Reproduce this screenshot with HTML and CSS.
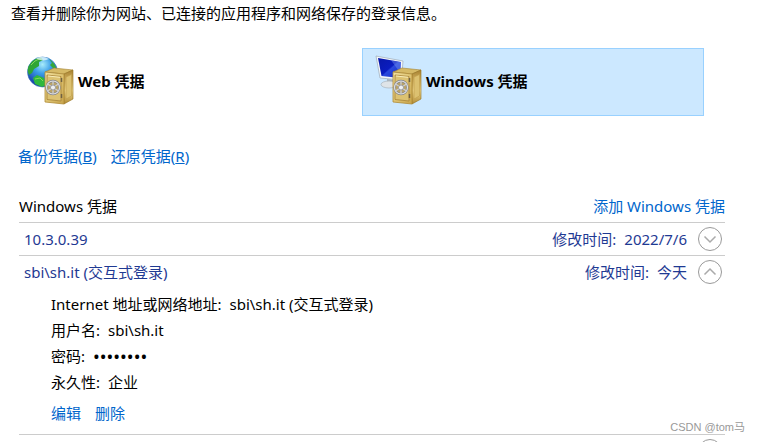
FILE: index.html
```
<!DOCTYPE html>
<html lang="zh-CN">
<head>
<meta charset="utf-8" />
<title>凭据管理器</title>
<link rel="stylesheet" href="styles.css">
</head>
<body>
<p class="intro">查看并删除你为网站、已连接的应用程序和网络保存的登录信息。</p>

<div class="tabs">
	<button type="button" class="tab">
		<svg class="tabIcon" viewBox="0 0 50 52" aria-hidden="true">
			<defs>
				<radialGradient id="sea" cx=".5" cy=".25" r=".75">
					<stop offset="0" stop-color="#a8ecfb"/>
					<stop offset=".4" stop-color="#3a9de8"/>
					<stop offset="1" stop-color="#1432a0"/>
				</radialGradient>
				<linearGradient id="front" x1="0" y1="0" x2="1" y2="1">
					<stop offset="0" stop-color="#f3e2a0"/>
					<stop offset=".5" stop-color="#dfc574"/>
					<stop offset="1" stop-color="#c6a24a"/>
				</linearGradient>
				<linearGradient id="side" x1="0" y1="0" x2="0" y2="1">
					<stop offset="0" stop-color="#a98230"/>
					<stop offset=".6" stop-color="#f0d98e"/>
					<stop offset="1" stop-color="#b08a34"/>
				</linearGradient>
				<linearGradient id="screen" x1="0" y1="0" x2="1" y2="1">
					<stop offset="0" stop-color="#0818a8"/>
					<stop offset=".5" stop-color="#0a1cc0"/>
					<stop offset=".55" stop-color="#2a48dc"/>
					<stop offset="1" stop-color="#1028c8"/>
				</linearGradient>
				<!-- 保险箱 -->
				<g id="safe">
					<path d="M18 17 27 13 46 15 37 19Z" fill="#d6ba66" stroke="#a58334" stroke-width=".6"/>
					<path d="M37 19 46 15 46 44 37 49Z" fill="url(#side)" stroke="#96721f" stroke-width=".6"/>
					<path d="M39 22 44.500 19.500 44.500 41 39 44Z" fill="#dcc170" stroke="#bf9c48" stroke-width=".6"/>
					<path d="M18 17 37 19 37 49 18 47Z" fill="url(#front)" stroke="#b08b36" stroke-width=".8"/>
					<path d="M20 20 34 21.500 34 46 20 44.500Z" fill="#dcc272" stroke="#a7843a" stroke-width=".8"/>
					<path d="M21 21 33 22.300" stroke="#f8ecb8"/>
					<path d="M34.500 23V27M34.500 39V43" stroke="#6f6142" stroke-width="1.500"/>
					<circle cx="26" cy="32.500" r="6.500" fill="#b9a368" stroke="#85858a" stroke-width="2.400"/>
					<circle cx="26" cy="32.500" r="6.500" fill="none" stroke="#dedfe2" stroke-width="1.200"/>
					<path d="M26 26V39M20.500 29 31.500 36M20.500 36 31.500 29" stroke="#cdced2" stroke-width="1.300"/>
					<circle cx="26" cy="32.500" r="2.500" fill="#eef0f3" stroke="#8c8c90" stroke-width=".8"/>
				</g>
			</defs>
			<circle cx="15.500" cy="17" r="15" fill="url(#sea)" stroke="#3472bb" stroke-width=".6"/>
			<path d="M3 9Q7 3 14 2.500L16 5 12 7 12 11 7 14 5 18 2 20Q-1 14 3 9Z" fill="#2fa536"/>
			<path d="M22 4Q28 8 29.500 14L26 13 23 10 25 8Z" fill="#3aa838"/>
			<path d="M6 23 10 20 17 23 19 30 15 32 8 29Z" fill="#2eb83e"/>
			<path d="M4 10 8 6 12 4M8 24 13 23 16 26" stroke="#86d65a" fill="none"/>
			<path d="M9 3.500Q15 0 22 4Q16 7 9 3.500" fill="#e9faff" opacity=".75"/>
			<use href="#safe"/>
		</svg>
		<span>Web 凭据</span>
	</button>
	<button type="button" class="tab active">
		<svg class="tabIcon" viewBox="0 0 50 52" aria-hidden="true">
			<path d="M12 24 20 25 20 31 12 30Z" fill="#aab4bd"/>
			<ellipse cx="14" cy="29.500" rx="8" ry="3.500" fill="#dfe4e8" stroke="#a9b3bc" stroke-width=".7"/>
			<path d="M1 1 28 6 26.500 25 5 23Z" fill="#f4f7fa" stroke="#9dabb8" stroke-width=".7"/>
			<path d="M3 3 26 7 25 23 6.500 21Z" fill="url(#screen)"/>
			<path d="M16 5.300 26 7 25.300 18Z" fill="#7f9df2" opacity=".4"/>
			<use href="#safe"/>
		</svg>
		<span>Windows 凭据</span>
	</button>
</div>

<div class="tools">
	<a href="#">备份凭据(<u>B</u>)</a>
	<a href="#">还原凭据(<u>R</u>)</a>
</div>

<div class="vault">
	<div class="vaultHead">
		<span>Windows 凭据</span>
		<a href="#">添加 Windows 凭据</a>
	</div>
	<div class="item">
		<div class="itemHead">
			<span class="name">10.3.0.39</span>
			<span class="label">修改时间:</span>
			<span>2022/7/6</span>
			<button type="button" class="toggle" aria-label="展开">
				<svg viewBox="0 0 24 24"><circle cx="12" cy="12" r="11.500"/><path d="M6.500 9.500 12 15 17.500 9.500"/></svg>
			</button>
		</div>
	</div>
	<div class="item">
		<div class="itemHead">
			<span class="name">sbi\sh.it (交互式登录)</span>
			<span class="label">修改时间:</span>
			<span>今天</span>
			<button type="button" class="toggle" aria-label="收起">
				<svg viewBox="0 0 24 24"><circle cx="12" cy="12" r="11.500"/><path d="M6.500 14.500 12 9 17.500 14.500"/></svg>
			</button>
		</div>
		<dl class="detail">
			<div><dt>Internet 地址或网络地址:</dt><dd>sbi\sh.it (交互式登录)</dd></div>
			<div><dt>用户名:</dt><dd>sbi\sh.it</dd></div>
			<div><dt>密码:</dt><dd class="dots">••••••••</dd></div>
			<div><dt>永久性:</dt><dd>企业</dd></div>
		</dl>
		<div class="actions">
			<a href="#">编辑</a>
			<a href="#">删除</a>
		</div>
	</div>
	<div class="item">
		<div class="itemHead">
			<span class="name"></span>
			<button type="button" class="toggle" aria-label="展开">
				<svg viewBox="0 0 24 24"><circle cx="12" cy="12" r="11.500"/><path d="M6.500 9.500 12 15 17.500 9.500"/></svg>
			</button>
		</div>
	</div>
</div>

<div class="watermark">CSDN @tom马</div>
</body>
</html>
```
FILE: styles.css
```
*{ box-sizing: border-box;}
body{ height: 100vh; margin: 0; padding: 3px 0 0; overflow: hidden; position: relative; background: #fff; color: #000; font: 15px/20px "Noto Sans","Noto Sans CJK SC",sans-serif;}
a{ color: #0066cc; text-decoration: none;}
button{ padding: 0; border: 0; background: none; color: inherit; font: inherit; cursor: pointer;}
.intro{ margin: 0 11px 25px;}

.tabs{ display: grid; grid-template-columns: 1fr 1fr; gap: 6px; margin: 0 55px 30px 14px;}
.tab{ display: flex; align-items: center; gap: 1px; height: 68px; padding: 0 12px 2px; border: 1px solid transparent; font-weight: bold;}
.tab.active{ background: #cce8ff; border-color: #99d1ff;}
.tabIcon{ width: 50px; height: 52px;}

.tools{ display: flex; gap: 14px; margin: 0 18px 30px;}

.vault{ margin: 0 34px 0 19px;}
.vaultHead{ display: flex; justify-content: space-between; padding-bottom: 6px;}
.item{ border-top: 1px solid #ccc;}
.itemHead{ display: flex; align-items: center; height: 32px; padding: 0 3px 0 5px; color: #1f3a93;}
.itemHead .name{ flex: 1;}
.itemHead .label{ margin-right: 8px;}
.toggle{ width: 24px; height: 24px; margin-left: 11px;}
.toggle svg{ display: block; fill: none; stroke: #999;}
.toggle path{ stroke: #aaa; stroke-width: 1.5;}

.detail{ margin: 0; padding: 3px 0 0 32px; line-height: 26px;}
.detail div{ display: flex; gap: 8px;}
.detail dd{ margin: 0;}
.detail .dots{ font-size: 18px;}
.actions{ display: flex; gap: 14px; padding: 8px 0 11px 32px;}

.watermark{ position: absolute; right: 14px; bottom: 5px; color: #999; font: 11px/20px "Liberation Sans","Noto Sans CJK SC",sans-serif;}
```
